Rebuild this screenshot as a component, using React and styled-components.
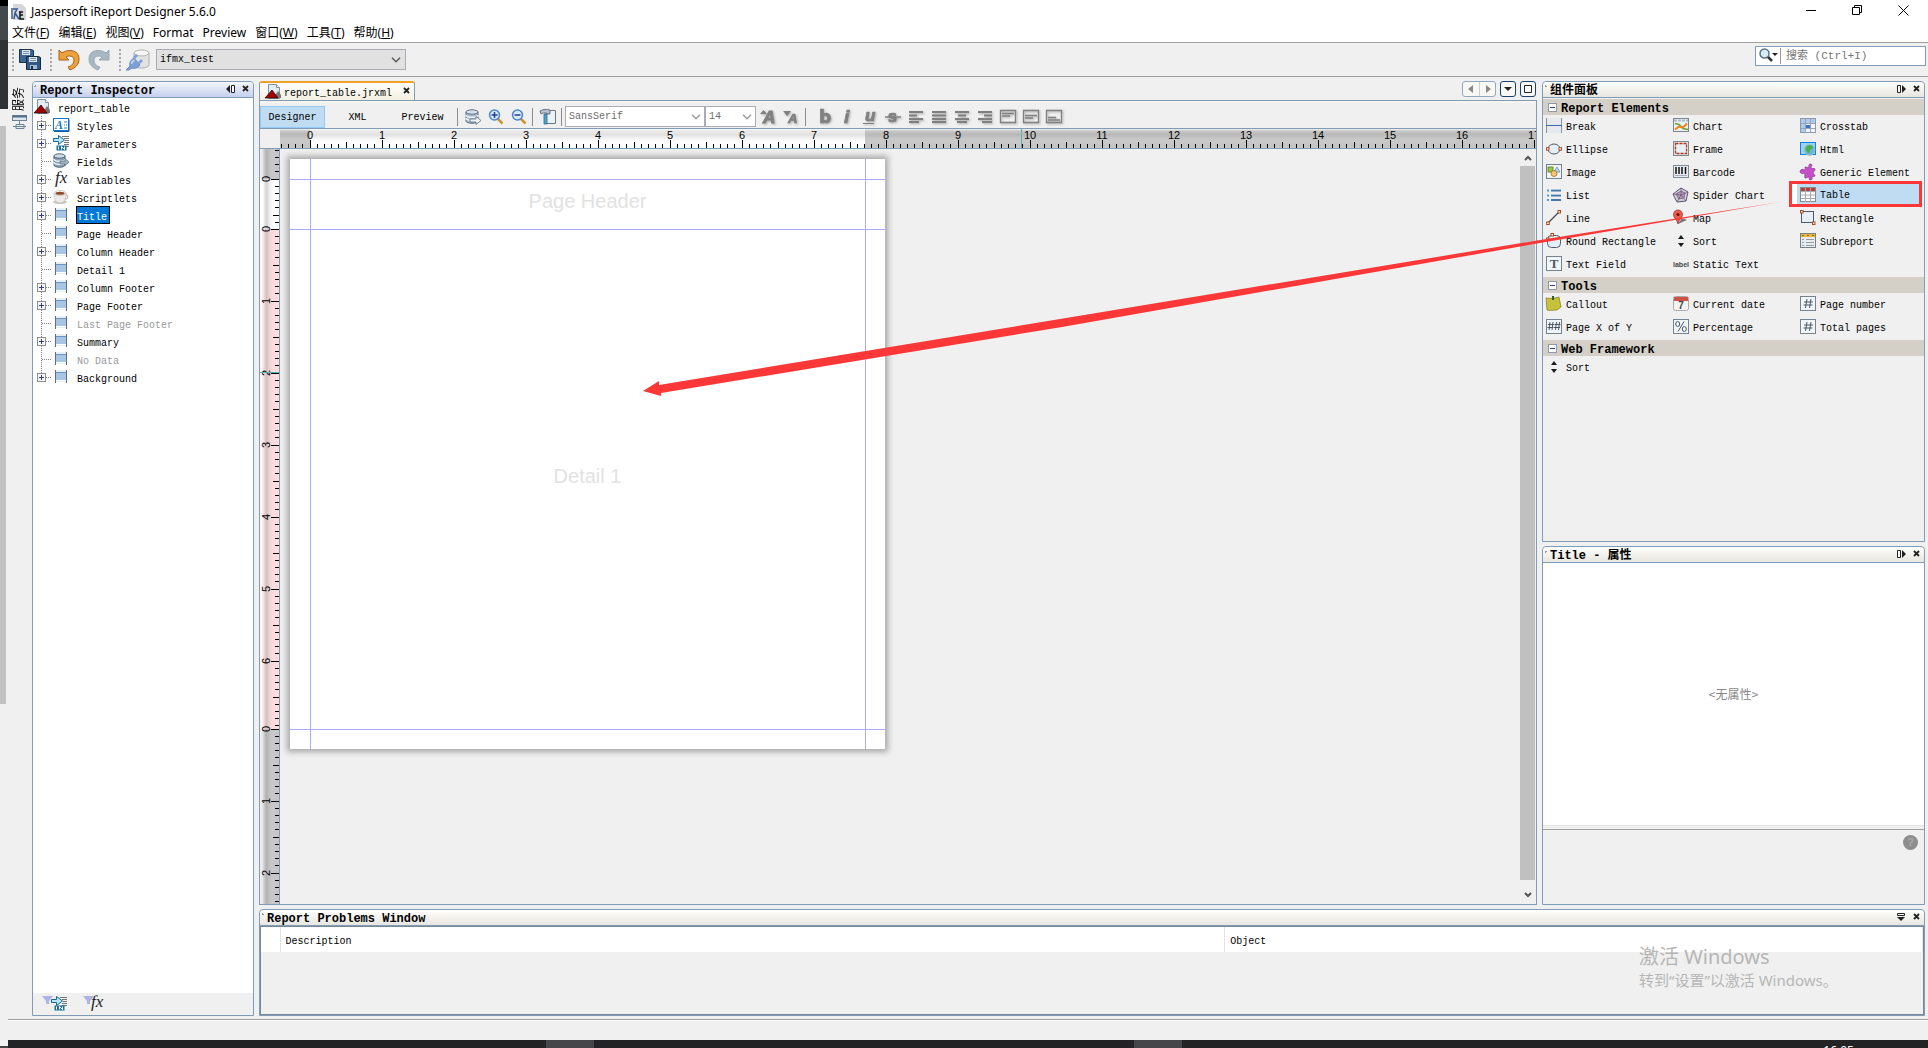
import React, { useState } from 'react';
import styled, { createGlobalStyle, css } from 'styled-components';

const mono = '"Liberation Mono", "Noto Sans CJK SC", monospace';
const ui = '"Noto Sans", "Noto Sans CJK SC", sans-serif';
const line = '#7f9db9';

/* ---------- data ---------- */

const menus = [
  { text: '文件', key: 'F' },
  { text: '编辑', key: 'E' },
  { text: '视图', key: 'V' },
  { text: 'Format' },
  { text: 'Preview' },
  { text: '窗口', key: 'W' },
  { text: '工具', key: 'T' },
  { text: '帮助', key: 'H' },
];

const treeItems = [
  { label: 'Styles', icon: 'styles', open: true },
  { label: 'Parameters', icon: 'params', open: true },
  { label: 'Fields', icon: 'fields' },
  { label: 'Variables', icon: 'fx', open: true },
  { label: 'Scriptlets', icon: 'cup', open: true },
  { label: 'Title', icon: 'band', open: true },
  { label: 'Page Header', icon: 'band' },
  { label: 'Column Header', icon: 'band', open: true },
  { label: 'Detail 1', icon: 'band' },
  { label: 'Column Footer', icon: 'band', open: true },
  { label: 'Page Footer', icon: 'band', open: true },
  { label: 'Last Page Footer', icon: 'band', muted: true },
  { label: 'Summary', icon: 'band', open: true },
  { label: 'No Data', icon: 'band', muted: true },
  { label: 'Background', icon: 'band', open: true },
];

const palette = [
  {
    name: 'Report Elements',
    items: [
      ['Break', 'break'], ['Chart', 'chart'], ['Crosstab', 'crosstab'],
      ['Ellipse', 'ellipse'], ['Frame', 'frame'], ['Html', 'html'],
      ['Image', 'image'], ['Barcode', 'barcode'], ['Generic Element', 'generic'],
      ['List', 'list'], ['Spider Chart', 'spider'], ['Table', 'table'],
      ['Line', 'line'], ['Map', 'map'], ['Rectangle', 'rect'],
      ['Round Rectangle', 'round'], ['Sort', 'sort'], ['Subreport', 'subreport'],
      ['Text Field', 'textfield'], ['Static Text', 'label'],
    ],
  },
  {
    name: 'Tools',
    items: [
      ['Callout', 'callout'], ['Current date', 'date'], ['Page number', 'hash'],
      ['Page X of Y', 'hashes'], ['Percentage', 'percent'], ['Total pages', 'hash'],
    ],
  },
  { name: 'Web Framework', items: [['Sort', 'sort']] },
];

/* ---------- icons ---------- */

const Handle = ({ x, y }) => (
  <rect x={x} y={y} width="2.5" height="2.5" fill="#fff" stroke="#a8481c" />
);

const Boxed = ({ children }) => (
  <>
    <rect x=".5" y=".5" width="15" height="14" fill="#f1f6fa" stroke="#75828f" />
    {children}
  </>
);

const glyphs = {
  report: (
    <>
      <path d="M3.5.5h8l3 3v11h-11z" fill="#e3ebf3" stroke="#8295a8" />
      <path d="M11.500 .5v3h3" fill="#fff" stroke="#8295a8" />
      <path d="M9 13l4-6 3 4v3H9z" fill="#777" />
      <path d="M0 14L7 6l6 8z" fill="#a00000" stroke="#200" strokeWidth=".7" />
    </>
  ),
  styles: (
    <>
      <rect x=".5" y="1.500" width="15" height="12" fill="#fff" stroke="#1979c9" />
      <path d="M1 14.500h15v-12" stroke="#145a9a" fill="none" />
      <text x="2" y="12" fontFamily="Liberation Serif" fontSize="12" fontStyle="italic" fontWeight="700" fill="#1878c8">A</text>
      <path d="M11 5h3M11 8h1M13 8h1M11 11h3" stroke="#2b7fc4" />
    </>
  ),
  params: (
    <>
      <path d="M9 1.500h7M11 3.500h5M12 5.500h4M11 7.500h5M11 9.500h5M12 11.500h4" stroke="#777" />
      <path d="M.5 3.500h5v-3l6 4.500-6 4.500v-3h-5z" fill="#b6e6f7" stroke="#16698e" />
      <path d="M3.500 10.500h10v5h-10z" fill="#1b7093" />
      <path d="M5.500 11.500v3M8.500 14.500v-3l3 3v-3" stroke="#fff" fill="none" />
    </>
  ),
  fields: (
    <>
      <path d="M1 3v9c0 3 11 3 11 0V3" fill="#8c9fb3" stroke="#4d6378" />
      <path d="M1 6c0 3 11 3 11 0M1 9c0 3 11 3 11 0" stroke="#eef4f9" fill="none" strokeWidth="1.500" />
      <ellipse cx="6.500" cy="3" rx="5.500" ry="2.200" fill="#cfdce8" stroke="#4d6378" />
      <path d="M7 8h5V5.500l4 3.500-4 3.500V11H7z" fill="#9fb0c1" stroke="#5b6f82" strokeWidth=".7" />
    </>
  ),
  fx: (
    <text x="2" y="12" fontFamily="Liberation Serif" fontSize="17" fontStyle="italic" fill="#222">fx</text>
  ),
  cup: (
    <>
      <ellipse cx="7" cy="13" rx="7" ry="2" fill="#c9c9c9" />
      <path d="M11 6c5-1 5 4 0 4" fill="none" stroke="#c8c4c0" strokeWidth="1.500" />
      <path d="M1 4c0 7 2 10 6 10s6-3 6-10z" fill="#ece9e6" stroke="#bbb5b0" strokeWidth=".6" />
      <ellipse cx="7" cy="4" rx="6" ry="2.500" fill="#f7f5f3" stroke="#b8b0aa" strokeWidth=".6" />
      <ellipse cx="7" cy="4.200" rx="4.500" ry="1.500" fill="#8d4b2c" />
    </>
  ),
  band: (
    <>
      <path d="M3 1h10v13H3z" fill="#e9eef3" />
      <path d="M3 4h10v7H3z" fill="#a9c5e6" />
      <path d="M3 3.500h10" stroke="#6b93c4" />
      <path d="M3 11.500h10M3 13.500h10" stroke="#fff" />
      <path d="M2.500 1v13M13.500 1v13" stroke="#5f6f80" />
    </>
  ),
  break: (
    <>
      <path d="M0 0h16v15H0z" fill="#e6e9ee" />
      <path d="M.5 0v15M15.500 0v15" stroke="#8a939c" />
      <path d="M0 7.500h16" stroke="#3f68b0" />
    </>
  ),
  chart: (
    <>
      <rect x=".5" y=".5" width="15" height="13" fill="#eef1f3" stroke="#7b8792" />
      <path d="M1 2.500h14" stroke="#a5b8cc" strokeWidth="2" strokeDasharray="3 1" />
      <path d="M2 5.500l4 1 4 4 5 1" stroke="#69a23b" fill="none" strokeWidth="1.500" />
      <path d="M2 11.500l4-3 4 1 4-4" stroke="#ef8316" fill="none" strokeWidth="2" />
    </>
  ),
  crosstab: (
    <>
      <rect x=".5" y=".5" width="15" height="14" fill="#f3f7fb" stroke="#8c9aa9" />
      <path d="M1 1h14v4H1zM1 1h4v13H1z" fill="#aecbed" />
      <path d="M6 7h5v4H6z" fill="#3f72c4" />
      <path d="M5.500 1v14M10.500 1v14M1 5.500h14M1 10.500h14" stroke="#93a5b8" />
    </>
  ),
  ellipse: (
    <>
      <ellipse cx="8" cy="8" rx="6" ry="5" fill="#e6eef7" stroke="#4f5a66" />
      <Handle x={.5} y={6.700} /><Handle x={13} y={6.700} />
    </>
  ),
  frame: (
    <>
      <rect x=".5" y=".5" width="15" height="14" fill="#dfe7ef" stroke="#7d8893" />
      <rect x="2.500" y="2.500" width="11" height="10" fill="#e9eff6" stroke="#b03a1c" strokeDasharray="3 1" strokeWidth="1.300" />
    </>
  ),
  html: (
    <>
      <rect x=".5" y="1.500" width="15" height="12" fill="#9bd2f5" stroke="#0e80e6" />
      <circle cx="9.500" cy="9" r="5.300" fill="#6fb5dd" stroke="#9dbfae" />
      <path d="M6 6c3-3 6-2 7 0-1 3-3 2-3 4s-2 3-3 1-2-3-1-5z" fill="#4caf4f" />
    </>
  ),
  image: (
    <Boxed>
      <rect x="2" y="3" width="5" height="5" fill="#9cc93e" stroke="#557a1c" strokeWidth=".8" />
      <path d="M11 3l3 5H8z" fill="#b6d8f4" stroke="#6b90b4" strokeWidth=".8" />
      <circle cx="8" cy="9.500" r="3" fill="#f4c777" stroke="#a36c1e" strokeWidth=".8" />
    </Boxed>
  ),
  barcode: (
    <>
      <rect x=".5" y="1.500" width="15" height="12" fill="#e9edf1" stroke="#7f8b96" />
      <path d="M3 3v7M6 3v7M9 3v7M12.500 3v7" stroke="#111" strokeWidth="1.500" />
      <path d="M2 11.500h12" stroke="#aab" />
    </>
  ),
  generic: (
    <path d="M5 3c0 2 1 2 0 3C3 5 1 5 0 7c0 3 3 3 4 2 2 1 0 3 1 5 2 0 2-1 4-1 1 1-1 2 1 3 3 0 2-2 2-3 1-1 2 0 3-1 0-2-2-2-2-3 0-2 2-1 2-4-1-1-3 0-4-1 0-2 2-3 0-4-3 0-2 2-2 3-1 1-2 0-4 0z" fill="#c44fc8" stroke="#8b3591" strokeWidth=".7" />
  ),
  list: (
    <>
      <path d="M5 3.500h10M5 8.500h10M5 13h10" stroke="#4678a8" strokeWidth="2" />
      <path d="M1 3.500h2M1 8.500h2M1 13h2" stroke="#4d9be0" strokeWidth="2" />
      <path d="M5 2.500h10M5 7.500h10" stroke="#a7c5e0" />
    </>
  ),
  spider: (
    <>
      <path d="M8 1l7 4-2 9-9 1-4-8z" fill="#d7cfdc" stroke="#5d5366" />
      <path d="M8 4l4 2-1 5-5 1-3-5z" fill="#b99ac4" stroke="#6f5a7a" strokeWidth=".8" />
      <path d="M8 1v7l7-3M8 8l5 6M8 8l-4 7M8 8L0 7" stroke="#5d5366" fill="none" strokeWidth=".7" />
    </>
  ),
  table: (
    <>
      <rect x=".5" y=".5" width="15" height="14" fill="#fff" stroke="#8b8b8b" />
      <path d="M1 1h14v3H1z" fill="#b5403a" />
      <path d="M5.500 1v14M10.500 1v14M1 4.500h14M1 8h14M1 11.500h14" stroke="#a5abb2" />
    </>
  ),
  line: (
    <>
      <path d="M2 13L13 2" stroke="#434b54" strokeWidth="1.200" />
      <Handle x={.7} y={12} /><Handle x={12} y={.5} />
    </>
  ),
  map: (
    <>
      <path d="M5 14l4-6 5 2z" fill="#777" />
      <path d="M5 14C4 9 .5 8 .5 4.500a4.500 4.500 0 0 1 9 0C9.500 8 6 9 5 14z" fill="#ee5b4c" stroke="#8c3028" strokeWidth=".7" />
      <circle cx="5" cy="4.500" r="1.500" fill="#611" />
    </>
  ),
  rect: (
    <>
      <rect x="1.500" y="1.500" width="12" height="11" fill="#e6eef7" stroke="#4f5a66" />
      <Handle x={.5} y={.5} /><Handle x={12.500} y={12} />
    </>
  ),
  round: (
    <>
      <rect x="1.500" y="2.500" width="13" height="12" rx="4" fill="#e6eef7" stroke="#4f5a66" />
      <Handle x={5} y={.5} /><Handle x={.5} y={5} />
    </>
  ),
  sort: (
    <path d="M8 2l3 4H5zM8 14l3-4H5z" fill="#1b1b1b" />
  ),
  subreport: (
    <>
      <rect x=".5" y=".5" width="15" height="14" fill="#e9ecee" stroke="#777f87" />
      <path d="M1 1h14v3H1z" fill="#e8b93e" />
      <path d="M2 2.500h12" stroke="#8a6a16" strokeDasharray="2 3" />
      <path d="M2 6.500h2M6 6.500h8M2 9.500h2M6 9.500h8M2 12.500h2M6 12.500h8" stroke="#969ca2" />
    </>
  ),
  textfield: (
    <Boxed>
      <text x="8" y="12" textAnchor="middle" fontFamily="Liberation Serif" fontWeight="700" fontSize="13" fill="#4d5b69">T</text>
    </Boxed>
  ),
  label: (
    <text x="8" y="11" textAnchor="middle" fontFamily="Liberation Sans" fontSize="7" fontWeight="700" fill="#444">label</text>
  ),
  callout: (
    <>
      <path d="M0 2c5 1 9 0 13-1l2 10-4 3c-4 0-7 1-10 0z" fill="#c5c13c" stroke="#7e7a1c" strokeWidth=".7" />
      <path d="M7 0v4" stroke="#3b5a2c" strokeWidth="2" />
    </>
  ),
  date: (
    <>
      <rect x=".5" y=".5" width="15" height="14" rx="2" fill="#f3f3f3" stroke="#aaa" />
      <path d="M1 1h14v4H1z" fill="#d0534a" />
      <text x="8" y="13" textAnchor="middle" fontFamily="Liberation Sans" fontWeight="700" fontSize="10" fill="#444">7</text>
    </>
  ),
  hash: (
    <Boxed>
      <path d="M7 3L5.500 12M11 3L9.500 12M4 6h9M3.500 9h9" stroke="#4b5864" />
    </Boxed>
  ),
  hashes: (
    <Boxed>
      <path d="M4 3L3 11M7 3L6 11M2 5.500h6M1.500 8.500h6M10.500 3l-1 8M13.500 3l-1 8M8.500 5.500h6M8 8.500h6" stroke="#4b5864" />
    </Boxed>
  ),
  percent: (
    <Boxed>
      <path d="M11 2.500L5 12.500" stroke="#4b5864" />
      <ellipse cx="4.700" cy="5" rx="2" ry="2.500" fill="none" stroke="#4b5864" />
      <ellipse cx="11.300" cy="10" rx="2" ry="2.500" fill="none" stroke="#4b5864" />
    </Boxed>
  ),
  database: (
    <>
      <path d="M1 3v9c0 3 12 3 12 0V3" fill="#a9b9c8" stroke="#5b7085" />
      <path d="M1 6c0 3 12 3 12 0M1 9c0 3 12 3 12 0" stroke="#f2f6fa" fill="none" strokeWidth="1.500" />
      <ellipse cx="7" cy="3" rx="6" ry="2.200" fill="#d5e0ea" stroke="#5b7085" />
      <path d="M5 10h6V7.500l5 4-5 4V13H5z" fill="#f0f3f6" stroke="#5b6f82" strokeWidth=".8" />
    </>
  ),
  zoomIn: (
    <>
      <path d="M9.500 9.500l5 5" stroke="#c9952f" strokeWidth="2.500" />
      <circle cx="6.500" cy="6" r="5" fill="#dbe9fb" stroke="#4e83cf" strokeWidth="1.500" />
      <path d="M3.500 6h6M6.500 3v6" stroke="#1c3f94" strokeWidth="1.500" />
    </>
  ),
  zoomOut: (
    <>
      <path d="M9.500 9.500l5 5" stroke="#c9952f" strokeWidth="2.500" />
      <circle cx="6.500" cy="6" r="5" fill="#dbe9fb" stroke="#4e83cf" strokeWidth="1.500" />
      <path d="M3.500 6h6" stroke="#1c3f94" strokeWidth="1.500" />
    </>
  ),
  hammer: (
    <>
      <path d="M8.500 1.500h7v13h-9v-9" fill="#eef2f6" stroke="#68798a" />
      <path d="M0 2c3-2 7-2 10-1v4H7V4H3L1 5z" fill="#b7c2cc" stroke="#51606e" strokeWidth=".8" />
      <path d="M4 5h3v10H4z" fill="#4fa3d1" stroke="#2a6a94" strokeWidth=".8" />
    </>
  ),
  saveAll: (
    <>
      <path d="M.5.5h12l2 1v12H.5z" fill="#3f6690" stroke="#17324f" />
      <path d="M3 1h8v5H3z" fill="#dfe9f2" />
      <path d="M4 2.500h6M4 4.500h6" stroke="#7590aa" />
      <path d="M7.500 7.500h12l2 1v12h-14z" fill="#335a84" stroke="#12283f" />
      <path d="M10 8h8v5h-8z" fill="#dfe9f2" />
      <path d="M11 9.500h6M11 11.500h6" stroke="#7590aa" />
      <path d="M11 16h7v4h-7z" fill="#a9bccd" />
      <path d="M12 17h2v3h-2z" fill="#17324f" />
    </>
  ),
  undo: (
    <path d="M1 1l3 3c5-4 17-4 17 6 0 6-4 9-9 11l-2-3c4-1 6-4 6-7 0-4-5-5-8-3l3 3H1z" fill="#eda03c" stroke="#a86312" />
  ),
  redo: (
    <path d="M21 1l-3 3C13 0 1 0 1 10c0 6 4 9 9 11l2-3c-4-1-6-4-6-7 0-4 5-5 8-3l-3 3h10z" fill="#a9b7c3" stroke="#9aa9b6" />
  ),
  plugDb: (
    <>
      <path d="M8 4v12c0 4 15 4 15 0V4" fill="#e2e2e2" stroke="#b0b0b0" />
      <ellipse cx="15.500" cy="4" rx="7.500" ry="3" fill="#f7f7f7" stroke="#b0b0b0" />
      <path d="M0 21l4-4c-1-4 1-6 4-8l6 7c-2 3-5 4-8 3l-3 2z" fill="#7c9fd6" stroke="#6a8cc4" />
      <path d="M8 9l3-3M13 14l3-3" stroke="#7c9fd6" strokeWidth="2.500" />
      <path d="M5.500 15c0-2 1-3 3-4" stroke="#c8d8f0" strokeWidth="1.500" />
    </>
  ),
  app: (
    <>
      <path d="M3 0h9l4 4v12H3z" fill="#d5d7da" />
      <path d="M1 5h6l-2 4 4 6M2 6v9M5 9l-1 6" stroke="#35588f" strokeWidth="1.500" fill="none" />
      <path d="M9 8h4M10 8v7h4M10 11h3" stroke="#111" strokeWidth="1.500" fill="none" />
    </>
  ),
  services: (
    <>
      <rect x=".5" y="1.500" width="14" height="5" fill="#dfe6ec" stroke="#6d8296" />
      <path d="M1 2.500h14" stroke="#52708c" strokeWidth="2" />
      <path d="M7.500 7v3M1 12.500h13M4 10.500h8v4H4z" fill="#e8edf2" stroke="#6d8296" />
    </>
  ),
  bigA: (
    <>
      <text x="3" y="14" fontFamily="Liberation Sans" fontStyle="italic" fontWeight="700" fontSize="17" stroke="#808080" fill="#808080">A</text>
      <path d="M0 5l3.500-4L7 5z" fill="#808080" />
    </>
  ),
  smallA: (
    <>
      <text x="5" y="14" fontFamily="Liberation Sans" fontStyle="italic" fontWeight="700" fontSize="13" stroke="#808080" strokeWidth=".7" fill="#808080">A</text>
      <path d="M0 2h8L4 7z" fill="#808080" />
    </>
  ),
  bold: <text x="3" y="14" fontFamily="DejaVu Sans" fontWeight="700" fontSize="17" stroke="#808080" strokeWidth=".7" fill="#808080">b</text>,
  italic: <text x="5" y="14" fontFamily="Liberation Sans" fontWeight="700" fontStyle="italic" fontSize="19" stroke="#808080" strokeWidth=".7" fill="#808080">i</text>,
  underline: (
    <>
      <text x="3" y="12" fontFamily="Liberation Sans" fontWeight="700" fontStyle="italic" fontSize="17" stroke="#808080" strokeWidth=".7" fill="#808080">u</text>
      <path d="M1 14.500h11" stroke="#808080" />
    </>
  ),
  strike: (
    <>
      <text x="3" y="13" fontFamily="DejaVu Sans" fontWeight="700" fontSize="15" stroke="#808080" strokeWidth=".7" fill="#808080">s</text>
      <path d="M0 8h16" stroke="#808080" strokeWidth="1.500" />
    </>
  ),
  left: <path d="M1 3h14M1 6.500h8M1 10h14M1 13h10" stroke="#808080" strokeWidth="2" />,
  justify: <path d="M1 3h14M1 6.500h14M1 10h14M1 13h14" stroke="#808080" strokeWidth="2" />,
  center: <path d="M1 3h14M4 6.500h8M1 10h14M3 13h10" stroke="#808080" strokeWidth="2" />,
  right: <path d="M1 3h14M7 6.500h8M1 10h14M5 13h10" stroke="#808080" strokeWidth="2" />,
  top: <path d="M.5 1.500h15v12H.5zM2 4.500h12M2 7h8" fill="none" stroke="#808080" strokeWidth="1.300" />,
  middle: <path d="M.5 1.500h15v12H.5zM2 6.500h12M2 9h8" fill="none" stroke="#808080" strokeWidth="1.300" />,
  bottom: <path d="M.5 1.500h15v12H.5zM2 8.500h8M2 11h12" fill="none" stroke="#808080" strokeWidth="1.300" />,
  funnelIn: (
    <>
      <path d="M0 0h11L7 5v3H4V5z" fill="#aab4e6" />
      <g transform="translate(9 0)">
        <path d="M9 1.500h7M11 3.500h5M12 5.500h4M11 7.500h5M11 9.500h5" stroke="#777" />
        <path d="M.5 3.500h5v-3l6 4.500-6 4.500v-3h-5z" fill="#b6e6f7" stroke="#16698e" />
        <path d="M3.500 9.500h10v5h-10z" fill="#1b7093" />
        <path d="M5.500 10.500v3M8.500 13.500v-3l3 3v-3" stroke="#fff" fill="none" />
      </g>
    </>
  ),
  funnelFx: (
    <>
      <path d="M0 0h11L7 5v3H4V5z" fill="#aab4e6" />
      <text x="8" y="11" fontFamily="Liberation Serif" fontSize="17" fontStyle="italic" fill="#222">fx</text>
    </>
  ),
};

const Icon = ({ name, w = 16, h = 16 }) => (
  <svg width={w} height={h} viewBox={`0 0 ${w} ${h}`} fill="none" aria-hidden="true">
    {glyphs[name]}
  </svg>
);

const CloseIcon = () => (
  <svg width="7" height="7" viewBox="0 0 7 7" aria-hidden="true">
    <path d="M1 1l5 5M6 1L1 6" stroke="#222" strokeWidth="1.800" />
  </svg>
);

const slidePaths = {
  left: ['M4 0v8L0 4z', 'M5.500.5h3v7h-3z'],
  right: ['M5 0v8l4-4z', 'M.5.5h3v7h-3z'],
  down: ['M0 4h8L4 8z', 'M.5.5h7v2h-7z'],
};

const SlideIcon = ({ dir }) => (
  <svg width="9" height="8" viewBox="0 0 9 8" aria-hidden="true">
    <path d={slidePaths[dir][0]} fill="#222" />
    <path d={slidePaths[dir][1]} fill="#fff" stroke="#222" />
  </svg>
);

const Chevron = ({ color = '#555' }) => (
  <svg width="10" height="6" viewBox="0 0 10 6" fill="none" aria-hidden="true">
    <path d="M1 .8l4 4 4-4" stroke={color} strokeWidth="1.300" />
  </svg>
);

/* ---------- rulers ---------- */

const UNIT = 72;

const ticksFor = (zero, from, to) => {
  const list = [];
  for (let n = Math.ceil(((from - zero) * 10) / UNIT); zero + (n * UNIT) / 10 <= to; n++) {
    const size = n % 10 === 0 ? 8 : n % 5 === 0 ? 6 : 4;
    list.push({ n, at: Math.floor(zero + (n * UNIT) / 10), size });
  }
  return list;
};

const HRuler = () => (
  <svg width="100%" height="19">
    <defs>
      <linearGradient id="shadeH" x2="0" y2="1">
        <stop offset="0" stopColor="#fff" stopOpacity=".8" />
        <stop offset=".15" stopColor="#bbb" stopOpacity=".3" />
        <stop offset=".3" stopColor="#999" stopOpacity=".3" />
        <stop offset=".8" stopColor="#fff" stopOpacity="0" />
      </linearGradient>
    </defs>
    <rect width="100%" height="19" fill="#c6c6c6" />
    <rect x="30" width="555" height="19" fill="#fff" />
    <rect width="100%" height="19" fill="url(#shadeH)" />
    {ticksFor(30, 1, 1256).map((t) => (
      <rect key={t.n} x={t.at} y={19 - t.size} width="1" height={t.size} fill="#000" />
    ))}
    {Array.from({ length: 18 }, (_, i) => (
      <text key={i} x={30 + i * UNIT} y="10" textAnchor="middle" fontFamily="Liberation Sans" fontSize="11">{i}</text>
    ))}
    <rect x="741" width="1" height="19" fill="#5fb0b0" />
  </svg>
);

const segments = [
  { zero: 30, from: 1, to: 79, labels: 1 },
  { zero: 80, from: 80, to: 579, labels: 7 },
  { zero: 580, from: 580, to: 754, labels: 3 },
];

const VRuler = () => (
  <svg width="19" height="100%">
    <defs>
      <linearGradient id="shadeV" x2="1" y2="0">
        <stop offset="0" stopColor="#fff" stopOpacity=".8" />
        <stop offset=".15" stopColor="#fff" stopOpacity=".5" />
        <stop offset=".35" stopColor="#888" stopOpacity=".35" />
        <stop offset=".8" stopColor="#fff" stopOpacity="0" />
      </linearGradient>
    </defs>
    <rect width="19" height="100%" fill="#c6c6c6" />
    <rect y="30" width="19" height="50" fill="#fff" />
    <rect y="80" width="19" height="500" fill="#ffdcdc" />
    <rect width="19" height="100%" fill="url(#shadeV)" />
    {segments.map((s) => (
      <g key={s.zero}>
        {ticksFor(s.zero, s.from, s.to).map((t) => (
          <rect key={t.n} x={19 - t.size} y={t.at} width={t.size} height="1" fill="#000" />
        ))}
        {Array.from({ length: s.labels }, (_, i) => (
          <text
            key={i}
            fontFamily="Liberation Sans"
            fontSize="11"
            textAnchor="middle"
            transform={`translate(10 ${s.zero + i * UNIT}) rotate(-90)`}
          >
            {i}
          </text>
        ))}
      </g>
    ))}
    <rect y="223" width="19" height="1" fill="#5fb0b0" />
  </svg>
);

/* ---------- dock panel ---------- */

const DockPanel = ({ title, active, dir = 'right', children, ...rest }) => (
  <Panel {...rest}>
    <PanelHeader $active={active}>
      <PanelTitle>{title}</PanelTitle>
      <HeaderButton type="button" aria-label="Minimize"><SlideIcon dir={dir} /></HeaderButton>
      <HeaderButton type="button" aria-label="Close"><CloseIcon /></HeaderButton>
    </PanelHeader>
    {children}
  </Panel>
);

const Branch = ({ expandable, last }) => (
  <svg width="20" height="18" viewBox="0 0 20 18" aria-hidden="true">
    <path d={last ? 'M8.500 0v9' : 'M8.500 0v18'} stroke="#808080" strokeDasharray="1 1" />
    <path d="M9 9.500h10" stroke="#808080" strokeDasharray="1 1" />
    {expandable && (
      <>
        <rect x="4.500" y="5.500" width="8" height="8" fill="#f6f6f6" stroke="#8d8d8d" />
        <path d="M6 9.500h5M8.500 7v5" stroke="#2b3f8c" />
      </>
    )}
  </svg>
);

const App = () => {
  const [selected, setSelected] = useState('Title');
  const [view, setView] = useState('Designer');
  const [search, setSearch] = useState('');

  return (
    <Screen>
      <GlobalStyle />
      <Behind>
        <BehindTop />
        <BehindScroll />
        <BehindRest />
      </Behind>
      <Window>
        <TitleBar>
          <Icon name="app" />
          <h1>Jaspersoft iReport Designer 5.6.0</h1>
          <WindowButton type="button" aria-label="Minimize">
            <svg width="11" height="11"><path d="M0 5.500h10" stroke="#000" /></svg>
          </WindowButton>
          <WindowButton type="button" aria-label="Restore">
            <svg width="11" height="11" fill="none" stroke="#000"><path d="M.5 2.500h7v7h-7zM2.500 2.500v-2h7v7h-2" /></svg>
          </WindowButton>
          <WindowButton type="button" aria-label="Close">
            <svg width="11" height="11" stroke="#000"><path d="M.5.5l10 10M10.500.5l-10 10" /></svg>
          </WindowButton>
        </TitleBar>

        <MenuBar>
          {menus.map((m) => (
            <button type="button" key={m.text}>
              {m.text}{m.key && <>(<u>{m.key}</u>)</>}
            </button>
          ))}
        </MenuBar>

        <Toolbar>
          <Grip />
          <ToolButton type="button" aria-label="Save all"><Icon name="saveAll" w={22} h={22} /></ToolButton>
          <Grip />
          <ToolButton type="button" aria-label="Undo"><Icon name="undo" w={22} h={22} /></ToolButton>
          <ToolButton type="button" aria-label="Redo"><Icon name="redo" w={22} h={22} /></ToolButton>
          <Grip />
          <ToolButton type="button" aria-label="Datasources"><Icon name="plugDb" w={24} h={22} /></ToolButton>
          <SelectBox $width="250px" $filled>
            <select aria-label="Datasource" defaultValue="ifmx_test"><option>ifmx_test</option></select>
            <Chevron />
          </SelectBox>
          <SearchBox>
            <svg width="21" height="15" viewBox="0 0 21 15" aria-hidden="true">
              <path d="M8 8l5 5" stroke="#333" strokeWidth="2.500" />
              <circle cx="5.500" cy="5.500" r="4.500" fill="#d9ecfa" stroke="#57738c" strokeWidth="1.500" />
              <path d="M13 5h6l-3 3z" fill="#222" />
            </svg>
            <input
              aria-label="搜索"
              placeholder="搜索 (Ctrl+I)"
              value={search}
              onChange={(e) => setSearch(e.target.value)}
            />
          </SearchBox>
        </Toolbar>

        <Main>
          <SideBar>
            <button type="button">服务</button>
            <Icon name="services" />
          </SideBar>

          <Inspector title="Report Inspector" active dir="left">
            <Tree>
              <TreeRow>
                <Icon name="report" />
                <TreeLabel type="button">report_table</TreeLabel>
              </TreeRow>
              {treeItems.map((item, i) => (
                <TreeRow key={item.label}>
                  <Branch expandable={item.open} last={i === treeItems.length - 1} />
                  <Icon name={item.icon} />
                  <TreeLabel
                    type="button"
                    $muted={item.muted}
                    $selected={selected === item.label}
                    onClick={() => setSelected(item.label)}
                  >
                    {item.label}
                  </TreeLabel>
                </TreeRow>
              ))}
            </Tree>
            <InspectorFooter>
              <button type="button" aria-label="Filter parameters"><Icon name="funnelIn" w={26} /></button>
              <button type="button" aria-label="Filter variables"><Icon name="funnelFx" w={24} /></button>
            </InspectorFooter>
          </Inspector>

          <Work>
            <Upper>
              <Editor>
                <TabStrip>
                  <Tab>
                    <Icon name="report" />
                    <span>report_table.jrxml</span>
                    <HeaderButton type="button" aria-label="Close tab"><CloseIcon /></HeaderButton>
                  </Tab>
                  <TabFill />
                  <TabControls>
                    <ArrowPair>
                      <button type="button" aria-label="Previous"><svg width="6" height="8"><path d="M5 0v8L0 4z" fill="#888" /></svg></button>
                      <button type="button" aria-label="Next"><svg width="6" height="8"><path d="M1 0v8l5-4z" fill="#888" /></svg></button>
                    </ArrowPair>
                    <TabControl type="button" aria-label="Documents"><svg width="8" height="5"><path d="M0 0h8L4 4z" fill="#222" /></svg></TabControl>
                    <TabControl type="button" aria-label="Maximize"><svg width="8" height="8"><path d="M.5.5h7v7h-7z" fill="none" stroke="#222" /></svg></TabControl>
                  </TabControls>
                </TabStrip>

                <EditorFrame>
                  <EditorBar>
                    {['Designer', 'XML', 'Preview'].map((name) => (
                      <ViewButton type="button" key={name} $active={view === name} onClick={() => setView(name)}>
                        {name}
                      </ViewButton>
                    ))}
                    <Divider />
                    {['database', 'zoomIn', 'zoomOut'].map((n) => (
                      <IconButton type="button" key={n} aria-label={n}><Icon name={n} /></IconButton>
                    ))}
                    <Divider />
                    <IconButton type="button" aria-label="Formatting tools"><Icon name="hammer" /></IconButton>
                    <Divider />
                    <SelectBox $width="140px" $muted>
                      <select aria-label="Font" defaultValue="SansSerif"><option>SansSerif</option></select>
                      <Chevron color="#999" />
                    </SelectBox>
                    <SelectBox $width="51px" $muted>
                      <select aria-label="Font size" defaultValue="14"><option>14</option></select>
                      <Chevron color="#999" />
                    </SelectBox>
                    {['bigA', 'smallA'].map((n) => (
                      <IconButton $soft type="button" key={n} aria-label={n}><Icon name={n} /></IconButton>
                    ))}
                    <Divider $wide />
                    {['bold', 'italic', 'underline', 'strike', 'left', 'justify', 'center', 'right', 'top', 'middle', 'bottom'].map((n) => (
                      <IconButton $soft type="button" key={n} aria-label={n}><Icon name={n} /></IconButton>
                    ))}
                  </EditorBar>
                  <RulerRow><HRuler /></RulerRow>
                  <CanvasRow>
                    <RulerColumn><VRuler /></RulerColumn>
                    <Canvas>
                      <Page>
                        <BandArea $height="21px" />
                        <BandArea $height="50px">Page Header</BandArea>
                        <BandArea $height="500px">Detail 1</BandArea>
                        <Margins />
                      </Page>
                    </Canvas>
                    <ScrollBar>
                      <button type="button" aria-label="Scroll up"><svg width="8" height="6" fill="none"><path d="M1 5l3-3 3 3" stroke="#555" strokeWidth="2" /></svg></button>
                      <ScrollThumb />
                      <button type="button" aria-label="Scroll down"><svg width="8" height="6" fill="none"><path d="M1 1l3 3 3-3" stroke="#555" strokeWidth="2" /></svg></button>
                    </ScrollBar>
                  </CanvasRow>
                </EditorFrame>
              </Editor>

              <RightColumn>
                <PalettePanel title="组件面板">
                  {palette.map((group) => (
                    <section key={group.name}>
                      <GroupHeader>
                        <svg width="9" height="9" aria-hidden="true">
                          <rect x=".5" y=".5" width="8" height="8" fill="#fff" stroke="#8d99a8" />
                          <path d="M2 4.500h5" stroke="#2b3f8c" />
                        </svg>
                        <span>{group.name}</span>
                      </GroupHeader>
                      <PaletteGrid>
                        {group.items.map(([label, icon]) => (
                          <PaletteItem type="button" key={label} $marked={label === 'Table'}>
                            <Icon name={icon} h={15} />
                            <span>{label}</span>
                          </PaletteItem>
                        ))}
                      </PaletteGrid>
                    </section>
                  ))}
                </PalettePanel>

                <PropertiesPanel title="Title - 属性">
                  <Empty>&lt;无属性&gt;</Empty>
                  <Description>
                    <button type="button" aria-label="Help">?</button>
                  </Description>
                </PropertiesPanel>
              </RightColumn>
            </Upper>

            <Problems title="Report Problems Window" dir="down">
              <ProblemsBody>
                <table>
                  <thead>
                    <tr>
                      <th aria-label="Severity" />
                      <th>Description</th>
                      <th>Object</th>
                    </tr>
                  </thead>
                </table>
              </ProblemsBody>
            </Problems>
          </Work>
        </Main>

        <StatusBar />
        <TaskBar>
          <TaskButton $left="538px" />
          <TaskButton $left="540px" />
          <time>16:05</time>
        </TaskBar>
      </Window>

      <ArrowMark width="1150" height="210" viewBox="640 195 1150 210" aria-hidden="true">
        <path d="M643 391l16-10v4L1060 319 1540 240l240-38-240 41-478 84L661 393v3z" fill="#fb3737" />
      </ArrowMark>
      <Watermark>
        <p>激活 Windows</p>
        <p>转到“设置”以激活 Windows。</p>
      </Watermark>
    </Screen>
  );
};

/* ---------- styles ---------- */

const GlobalStyle = createGlobalStyle`
  * { box-sizing: border-box; }
  body {
    margin: 0;
    background: #f0f0f0;
    color: #000;
    font: 10px/16px ${mono};
  }
  button, select, input {
    font: inherit;
    color: inherit;
    border: 0;
    padding: 0;
    background: none;
    outline: none;
  }
  svg { display: block; flex: none; overflow: visible; }
  h1, h2, p, ul { margin: 0; padding: 0; }
`;

const Screen = styled.div`
  display: flex;
  min-height: 100vh;
  position: relative;
  overflow: hidden;
`;

const Behind = styled.div`
  width: 8px;
  flex: none;
  display: flex;
  flex-direction: column;
`;

const BehindTop = styled.div`
  height: 109px;
  border-top: 6px solid #000;
  background: linear-gradient(#43484c 34px, #2f3336 34px);
`;

const BehindScroll = styled.div`
  height: 595px;
  margin-right: 2px;
  border-top: 17px solid #f0f0f0;
  background: #c1c1c1;
`;

const BehindRest = styled.div`
  flex: 1;
  border-bottom: 2px solid #444;
`;

const Window = styled.div`
  flex: 1;
  min-width: 0;
  display: flex;
  flex-direction: column;
`;

const TitleBar = styled.header`
  display: flex;
  align-items: center;
  height: 24px;
  padding: 0 2px;
  background: #fff;
  h1 {
    flex: 1;
    margin-left: 5px;
    font: 400 12px/24px ${ui};
  }
`;

const WindowButton = styled.button`
  width: 46px;
  height: 20px;
  margin-bottom: 4px;
  display: grid;
  place-items: center;
`;

const MenuBar = styled.nav`
  display: flex;
  gap: 9px;
  height: 19px;
  padding-left: 4px;
  background: #fff;
  border-bottom: 1px solid #9f9f9f;
  font: 12px/18px ${ui};
`;

const Toolbar = styled.div`
  display: flex;
  align-items: center;
  height: 34px;
  border-bottom: 1px solid #a0a0a0;
`;

const Grip = styled.div`
  width: 2px;
  height: 22px;
  margin: 0 2px 0 5px;
  background: repeating-linear-gradient(#a8a8a8 0 2px, transparent 2px 4px);
  &:first-child { margin: 0 1px 0 4px; }
`;

const ToolButton = styled.button`
  width: 30px;
  height: 30px;
  display: grid;
  place-items: center;
`;

const SelectBox = styled.div`
  display: flex;
  align-items: center;
  width: ${(p) => p.$width};
  height: 21px;
  margin-left: ${(p) => (p.$filled ? 3 : 0)}px;
  padding-right: ${(p) => (p.$filled ? 4 : 3)}px;
  border: 1px solid #a9acb2;
  background: ${(p) => (p.$filled ? '#e1e1e1' : '#fff')};
  color: ${(p) => (p.$muted ? '#6d6d6d' : '#000')};
  select {
    appearance: none;
    flex: 1;
    min-width: 0;
    height: 19px;
    padding-left: 3px;
  }
`;

const SearchBox = styled.label`
  display: flex;
  align-items: center;
  width: 171px;
  height: 20px;
  margin: 0 2px 8px auto;
  padding-left: 3px;
  border: 1px solid ${line};
  background: #fff;
  input {
    flex: 1;
    min-width: 0;
    height: 16px;
    padding-left: 5px;
    border-left: 1px solid #999;
    font-size: 11px;
    line-height: 16px;
    color: #666;
    &::placeholder { color: #777; }
  }
`;

const Main = styled.main`
  flex: 1;
  display: flex;
  padding: 4px 3px 3px 0;
`;

const SideBar = styled.aside`
  width: 24px;
  flex: none;
  padding: 4px 0 0 4px;
  button {
    display: block;
    width: 16px;
    margin: 2px 0 3px;
    writing-mode: vertical-rl;
    text-orientation: sideways;
    transform: rotate(180deg);
    font: 12px/16px ${mono};
  }
`;

const Panel = styled.section`
  display: flex;
  flex-direction: column;
  border: 1px solid ${line};
  border-radius: 4px 4px 0 0;
`;

const PanelHeader = styled.div`
  display: flex;
  align-items: center;
  height: 16px;
  padding: 0 0 0 7px;
  border-bottom: 1px solid ${line};
  border-radius: 4px 4px 0 0;
  background:
    radial-gradient(circle, #999 1px, transparent 1px) 1px 2px / 3px 5px no-repeat,
    ${(p) => (p.$active ? 'linear-gradient(#f4f7fd, #c3cfec)' : 'linear-gradient(#fffffb, #e7e6e0)')};
`;

const PanelTitle = styled.h2`
  flex: 1;
  padding-top: 3px;
  font: 700 12px/12px ${mono};
`;

const HeaderButton = styled.button`
  width: 15px;
  height: 15px;
  padding-bottom: 2px;
  display: grid;
  place-items: center;
`;

const Inspector = styled(DockPanel)`
  width: 222px;
  flex: none;
  background: #fff;
`;

const Tree = styled.ul`
  flex: 1;
  list-style: none;
`;

const TreeRow = styled.li`
  display: flex;
  align-items: center;
  height: 18px;
  &:first-child { padding-left: 1px; }
`;

const TreeLabel = styled.button`
  height: 18px;
  margin-left: 7px;
  padding: 6px 2px 0 0;
  border: 1px solid transparent;
  line-height: 10px;
  color: ${(p) => (p.$muted ? '#999' : '#000')};
  ${(p) => p.$selected && css`
    color: #fff;
    background: #0078d7;
    border-color: #000;
  `}
`;

const InspectorFooter = styled.div`
  display: flex;
  align-items: center;
  gap: 15px;
  height: 22px;
  padding-left: 9px;
  background: #f0f0f0;
`;

const Work = styled.div`
  flex: 1;
  min-width: 0;
  margin-left: 5px;
  display: flex;
  flex-direction: column;
  gap: 4px;
`;

const Upper = styled.div`
  flex: 1;
  display: flex;
  gap: 5px;
`;

const Editor = styled.section`
  flex: 1;
  min-width: 0;
  display: flex;
  flex-direction: column;
`;

const TabStrip = styled.div`
  display: flex;
  height: 19px;
`;

const Tab = styled.div`
  display: flex;
  align-items: center;
  width: 156px;
  padding: 0 0 0 5px;
  border: 1px solid ${line};
  border-top: 2px solid #f0a226;
  border-bottom: 0;
  border-radius: 3px 3px 0 0;
  background: linear-gradient(#fff, #f3f0e0);
  span {
    flex: 1;
    margin-left: 3px;
    padding-top: 5px;
    line-height: 12px;
  }
`;

const TabFill = styled.div`
  flex: 1;
`;

const TabControls = styled.div`
  display: flex;
  gap: 4px;
  padding-right: 1px;
`;

const TabControl = styled.button`
  width: 16px;
  height: 16px;
  display: grid;
  place-items: center;
  border: 1px solid #17406d;
  border-radius: 3px;
  background: #f8f8f5;
`;

const ArrowPair = styled.div`
  display: flex;
  height: 16px;
  border: 1px solid #8fa9c1;
  border-radius: 3px;
  background: #f8f8f5;
  button {
    width: 16px;
    display: grid;
    place-items: center;
    & + button { border-left: 1px solid #c5ced6; }
  }
`;

const EditorFrame = styled.div`
  flex: 1;
  display: flex;
  flex-direction: column;
  border: 1px solid ${line};
`;

const EditorBar = styled.div`
  display: flex;
  align-items: center;
  height: 28px;
  padding-top: 2px;
  border-top: 2px solid #f7f6ee;
  border-bottom: 1px solid ${line};
`;

const ViewButton = styled.button`
  width: 65px;
  height: 22px;
  padding-top: 2px;
  border: 1px solid ${(p) => (p.$active ? '#91c9f7' : 'transparent')};
  background: ${(p) => (p.$active ? '#c0dcf3' : 'none')};
`;

const Divider = styled.div`
  width: 1px;
  height: 18px;
  margin: ${(p) => (p.$wide ? '0 6px 0 3px' : '0 3px 0 2px')};
  background: #8c8c8c;
`;

const IconButton = styled.button`
  width: 23px;
  height: 22px;
  display: grid;
  place-items: center;
  ${(p) => p.$soft && css`
    filter: drop-shadow(1px 1px 1px rgba(0, 0, 0, 0.3));
  `}
`;

const RulerRow = styled.div`
  padding-left: 20px;
  border-bottom: 1px solid ${line};
  overflow: hidden;
`;

const CanvasRow = styled.div`
  flex: 1;
  display: flex;
`;

const RulerColumn = styled.div`
  width: 20px;
  flex: none;
  display: flex;
  overflow: hidden;
  border-right: 1px solid ${line};
`;

const Canvas = styled.div`
  flex: 1;
  padding: 10px;
  overflow: hidden;
`;

const Page = styled.div`
  position: relative;
  width: 595px;
  height: 590px;
  background: #fff;
  box-shadow: 0 0 6px 3px rgba(0, 0, 0, 0.3);
`;

const BandArea = styled.div`
  display: flex;
  align-items: center;
  justify-content: center;
  height: ${(p) => p.$height};
  padding-bottom: 7px;
  border-bottom: 1px solid #aaaaff;
  font: 20px/24px "Liberation Sans", sans-serif;
  color: #e2e2e2;
`;

const Margins = styled.div`
  position: absolute;
  inset: 0 19px 0 20px;
  border: 1px solid #aaaaff;
  border-width: 0 1px;
`;

const ScrollBar = styled.div`
  width: 16px;
  flex: none;
  display: flex;
  flex-direction: column;
  button {
    height: 17px;
    display: grid;
    place-items: center;
    &:last-child {
      height: 24px;
      padding-top: 6px;
    }
  }
`;

const ScrollThumb = styled.div`
  flex: 1;
  margin-right: 1px;
  background: #c0c0c0;
`;

const RightColumn = styled.div`
  width: 383px;
  flex: none;
  display: flex;
  flex-direction: column;
  gap: 4px;
`;

const PalettePanel = styled(DockPanel)`
  height: 461px;
`;

const GroupHeader = styled.h2`
  display: flex;
  align-items: center;
  gap: 4px;
  height: 16px;
  padding-left: 5px;
  background: #d4d0c8;
  section:first-of-type > & { margin-top: 1px; }
  span {
    padding-top: 3px;
    font: 700 12px/12px ${mono};
  }
`;

const PaletteGrid = styled.div`
  display: grid;
  grid-template-columns: repeat(3, 1fr);
  grid-auto-rows: 23px;
  padding-bottom: 1px;
`;

const PaletteItem = styled.button`
  display: flex;
  align-items: center;
  gap: 4px;
  padding: 0 0 2px 3px;
  text-align: left;
  span { padding-top: 4px; }
  ${(p) => p.$marked && css`
    margin: -3px 2px 0 -8px;
    padding: 0 0 0 8px;
    border: 3px solid #fb3737;
    background: linear-gradient(90deg, #fff 5px, #c0dcf3 5px);
  `}
`;

const PropertiesPanel = styled(DockPanel)`
  flex: 1;
`;

const Empty = styled.div`
  flex: 1;
  display: grid;
  place-items: center;
  border-bottom: 1px solid #e3e3e3;
  background: #fff;
  color: #888;
  font: 12px/16px "Noto Sans CJK SC", sans-serif;
`;

const Description = styled.div`
  height: 75px;
  margin-top: 3px;
  padding: 5px 6px;
  border-top: 1px solid #a0a0a0;
  text-align: right;
  button {
    width: 15px;
    height: 15px;
    border-radius: 50%;
    background: #8e8e8e;
    color: #aaa;
    font: 700 11px/15px "Liberation Sans", sans-serif;
  }
`;

const Problems = styled(DockPanel)`
  height: 107px;
`;

const ProblemsBody = styled.div`
  flex: 1;
  border: 1px solid #7c8794;
  table {
    width: 100%;
    table-layout: fixed;
    border-collapse: collapse;
    background: #fff;
  }
  th {
    height: 25px;
    padding: 4px 0 0 5px;
    border-right: 1px solid #e3e3e3;
    font-weight: 400;
    text-align: left;
    &:first-child { width: 19px; }
    &:last-child { width: 42%; }
  }
`;

const StatusBar = styled.footer`
  height: 21px;
  border-top: 1px solid #a0a0a0;
  box-shadow: inset 0 1px #fff;
`;

const TaskBar = styled.div`
  display: flex;
  height: 8px;
  background: #232325;
  overflow: hidden;
  time {
    margin: 5px 74px 0 auto;
    color: #fff;
    font: 12px/12px ${ui};
  }
`;

const TaskButton = styled.div`
  width: 48px;
  margin-left: ${(p) => p.$left};
  background: #45464a;
`;

const ArrowMark = styled.svg`
  position: absolute;
  left: 640px;
  top: 195px;
  pointer-events: none;
`;

const Watermark = styled.div`
  position: absolute;
  right: 93px;
  bottom: 57px;
  width: 196px;
  color: #b6b6b6;
  white-space: nowrap;
  pointer-events: none;
  font: 15px/22px ${ui};
  p:first-child {
    font-size: 20px;
    line-height: 24px;
  }
`;

export default App;
